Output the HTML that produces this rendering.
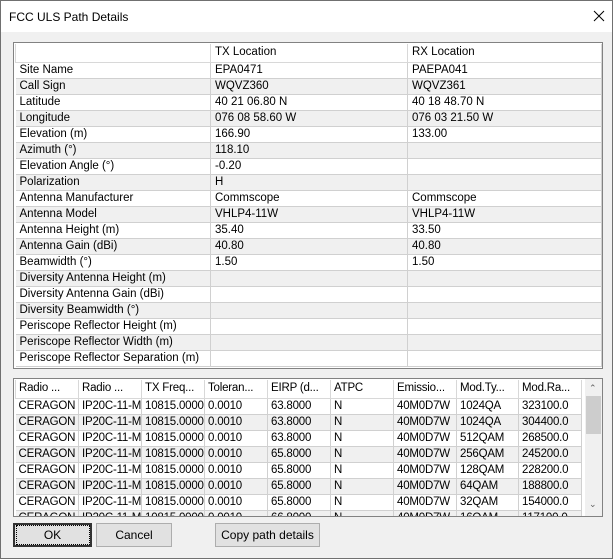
<!DOCTYPE html>
<html><head><style>
*{box-sizing:border-box;margin:0;padding:0}
body{width:613px;height:559px;background:#f0f0f0;font-family:"Liberation Sans",sans-serif;font-size:11.5px;color:#000;position:relative;overflow:hidden;border:1px solid #707070}
.title{position:absolute;left:0;top:0;width:611px;height:31px;background:#fff}
.title span{position:absolute;left:8px;top:9px;font-size:12px}
.x{position:absolute;left:592px;top:9px;width:12px;height:12px}
.box{position:absolute;background:#fff;border:1px solid #828282;overflow:hidden}
table{border-collapse:collapse;table-layout:fixed}
td,th{height:16px;border-right:1px solid #d0d0d0;border-bottom:1px solid #d0d0d0;padding:0 0 0 4px;white-space:nowrap;overflow:hidden;font-weight:normal;text-align:left;line-height:15px}
.b td,.b th{padding-left:3px;letter-spacing:-0.2px}
th{height:18px;border:1px solid #d8d8d8;border-top:none;background:#fff}
tr.g td{background:#f0f0f0}
.btn{position:absolute;height:24px;border:1px solid #adadad;background:#e1e1e1;text-align:center;line-height:22px;font-size:12px}
</style></head><body>
<div class="title"><span>FCC ULS Path Details</span>
<svg class="x" viewBox="0 0 12 12"><path d="M1 1L11 11M11 1L1 11" stroke="#000" stroke-width="1"/></svg></div>

<div class="box" style="left:12px;top:41px;width:590px;height:327px;padding:1px">
<table style="width:586px">
<colgroup><col style="width:195px"><col style="width:197px"><col style="width:194px"></colgroup>
<tr><th></th><th>TX Location</th><th>RX Location</th></tr>
<tr><td>Site Name</td><td>EPA0471</td><td>PAEPA041</td></tr>
<tr class="g"><td>Call Sign</td><td>WQVZ360</td><td>WQVZ361</td></tr>
<tr><td>Latitude</td><td>40 21 06.80 N</td><td>40 18 48.70 N</td></tr>
<tr class="g"><td>Longitude</td><td>076 08 58.60 W</td><td>076 03 21.50 W</td></tr>
<tr><td>Elevation (m)</td><td>166.90</td><td>133.00</td></tr>
<tr class="g"><td>Azimuth (°)</td><td>118.10</td><td></td></tr>
<tr><td>Elevation Angle (°)</td><td>-0.20</td><td></td></tr>
<tr class="g"><td>Polarization</td><td>H</td><td></td></tr>
<tr><td>Antenna Manufacturer</td><td>Commscope</td><td>Commscope</td></tr>
<tr class="g"><td>Antenna Model</td><td>VHLP4-11W</td><td>VHLP4-11W</td></tr>
<tr><td>Antenna Height (m)</td><td>35.40</td><td>33.50</td></tr>
<tr class="g"><td>Antenna Gain (dBi)</td><td>40.80</td><td>40.80</td></tr>
<tr><td>Beamwidth (°)</td><td>1.50</td><td>1.50</td></tr>
<tr class="g"><td>Diversity Antenna Height (m)</td><td></td><td></td></tr>
<tr><td>Diversity Antenna Gain (dBi)</td><td></td><td></td></tr>
<tr class="g"><td>Diversity Beamwidth (°)</td><td></td><td></td></tr>
<tr><td>Periscope Reflector Height (m)</td><td></td><td></td></tr>
<tr class="g"><td>Periscope Reflector Width (m)</td><td></td><td></td></tr>
<tr><td>Periscope Reflector Separation (m)</td><td></td><td></td></tr>
</table></div>

<div class="box" style="left:12px;top:377px;width:590px;height:139px;padding:1px">
<table class="b" style="width:566px">
<colgroup><col style="width:63px"><col style="width:63px"><col style="width:63px"><col style="width:63px"><col style="width:63px"><col style="width:63px"><col style="width:63px"><col style="width:62px"><col style="width:63px"></colgroup>
<tr><th>Radio ...</th><th>Radio ...</th><th>TX Freq...</th><th>Toleran...</th><th>EIRP (d...</th><th>ATPC</th><th>Emissio...</th><th>Mod.Ty...</th><th>Mod.Ra...</th></tr>
<tr><td>CERAGON</td><td>IP20C-11-M</td><td>10815.0000</td><td>0.0010</td><td>63.8000</td><td>N</td><td>40M0D7W</td><td>1024QA</td><td>323100.0</td></tr>
<tr class="g"><td>CERAGON</td><td>IP20C-11-M</td><td>10815.0000</td><td>0.0010</td><td>63.8000</td><td>N</td><td>40M0D7W</td><td>1024QA</td><td>304400.0</td></tr>
<tr><td>CERAGON</td><td>IP20C-11-M</td><td>10815.0000</td><td>0.0010</td><td>63.8000</td><td>N</td><td>40M0D7W</td><td>512QAM</td><td>268500.0</td></tr>
<tr class="g"><td>CERAGON</td><td>IP20C-11-M</td><td>10815.0000</td><td>0.0010</td><td>65.8000</td><td>N</td><td>40M0D7W</td><td>256QAM</td><td>245200.0</td></tr>
<tr><td>CERAGON</td><td>IP20C-11-M</td><td>10815.0000</td><td>0.0010</td><td>65.8000</td><td>N</td><td>40M0D7W</td><td>128QAM</td><td>228200.0</td></tr>
<tr class="g"><td>CERAGON</td><td>IP20C-11-M</td><td>10815.0000</td><td>0.0010</td><td>65.8000</td><td>N</td><td>40M0D7W</td><td>64QAM</td><td>188800.0</td></tr>
<tr><td>CERAGON</td><td>IP20C-11-M</td><td>10815.0000</td><td>0.0010</td><td>65.8000</td><td>N</td><td>40M0D7W</td><td>32QAM</td><td>154000.0</td></tr>
<tr class="g"><td>CERAGON</td><td>IP20C-11-M</td><td>10815.0000</td><td>0.0010</td><td>66.8000</td><td>N</td><td>40M0D7W</td><td>16QAM</td><td>117100.0</td></tr>
</table>
<div style="position:absolute;left:571px;top:0;width:17px;height:137px;background:#f0f0f0">
<div style="position:absolute;left:4px;top:4px;font-size:9px;color:#606060">&#8963;</div>
<div style="position:absolute;left:1px;top:17px;width:15px;height:38px;background:#cdcdcd"></div>
<div style="position:absolute;left:4px;top:120px;font-size:9px;color:#606060">&#8964;</div>
</div></div>

<div class="btn" style="left:12px;top:522px;width:79px;border:2px solid #333;line-height:20px"><span style="outline:1px dotted #000;outline-offset:2px;display:inline-block;width:68px;line-height:14px">OK</span></div>
<div class="btn" style="left:95px;top:522px;width:76px">Cancel</div>
<div class="btn" style="left:214px;top:522px;width:105px">Copy path details</div>
</body></html>
